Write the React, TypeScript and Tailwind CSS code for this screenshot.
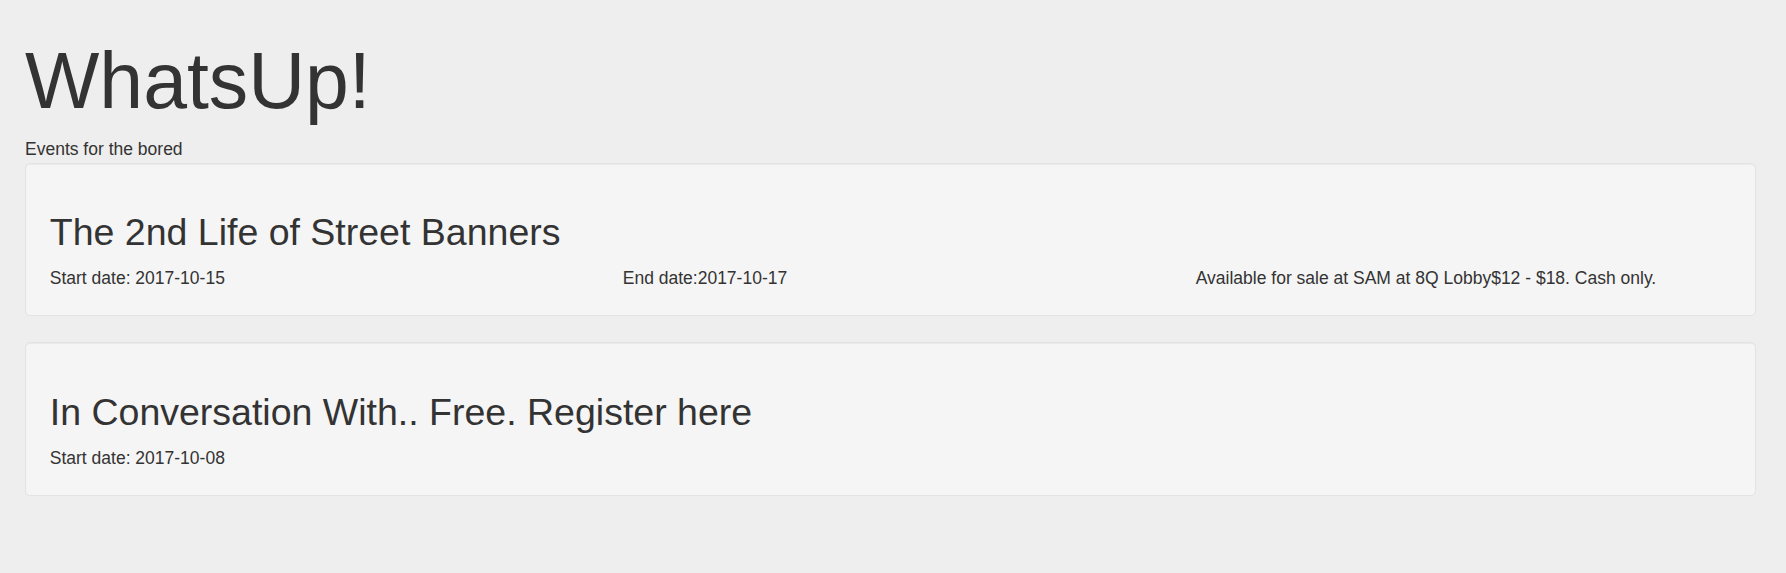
const events = [
  {
    title: 'The 2nd Life of Street Banners',
    start: '2017-10-15',
    end: '2017-10-17',
    info: 'Available for sale at SAM at 8Q Lobby$12 - $18. Cash only.',
  },
  {
    title: 'In Conversation With.. Free. Register here',
    start: '2017-10-08',
  },
];

const EventCard = ({ event }: { event: (typeof events)[number] }) => (
  <div className="mb-[26.5px] rounded-[5px] border border-[#e3e3e3] bg-[#f5f5f5] p-[23.75px] shadow-[inset_0_1px_1px_rgba(0,0,0,0.05)]">
    <h2 className="mt-[25px] mb-[12.5px] text-[37.5px] leading-[1.1] font-normal">{event.title}</h2>
    <div className="grid grid-cols-3 gap-x-[37.5px]">
      <div>Start date: {event.start}</div>
      {event.end && <div>End date:{event.end}</div>}
      {event.info && <div>{event.info}</div>}
    </div>
  </div>
);

export default function App() {
  return (
    <div
      className="min-h-screen bg-[#eeeeee] pt-[37.5px] pl-[25px] pr-[30px] text-[17.5px] leading-[25px] text-[#333333]"
      style={{ fontFamily: '"Liberation Sans", Arial, Helvetica, sans-serif' }}
    >
      <h1 className="mb-[12.5px] text-[78.75px] leading-[1.1] font-normal">WhatsUp!</h1>
      <p className="mb-[1px]">Events for the bored</p>
      {events.map((e) => (
        <EventCard key={e.title} event={e} />
      ))}
    </div>
  );
}
